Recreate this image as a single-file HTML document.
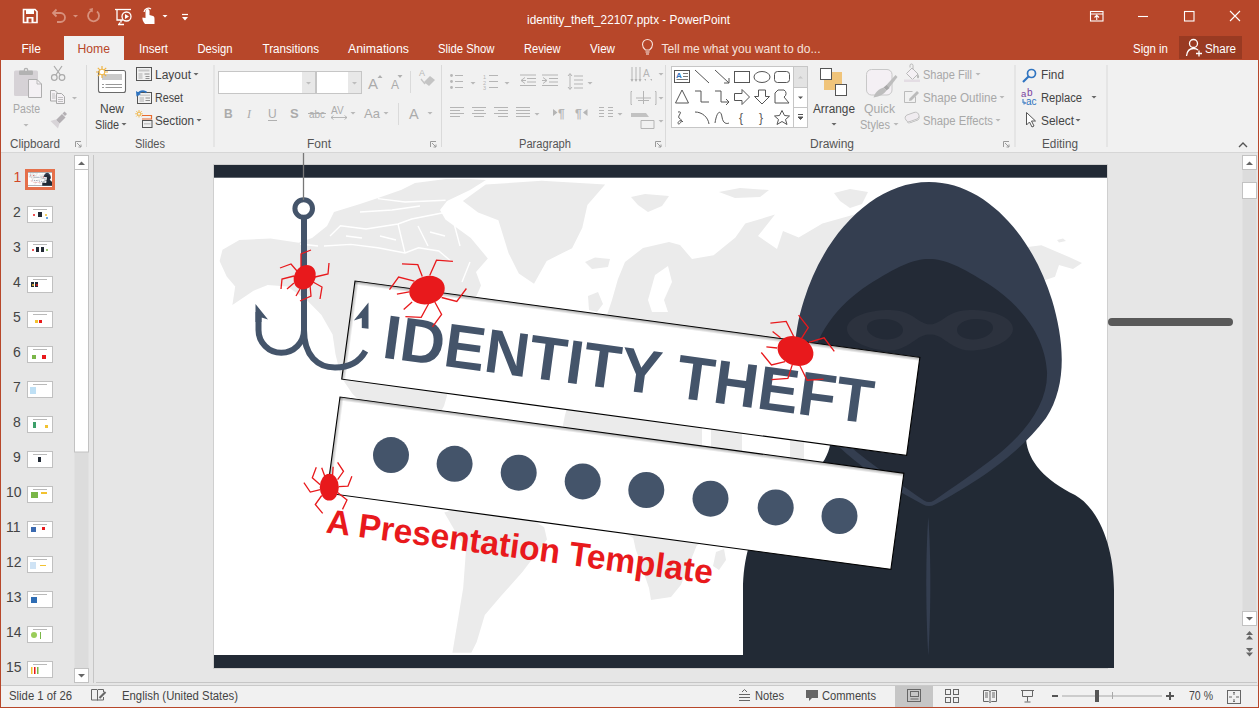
<!DOCTYPE html>
<html><head><meta charset="utf-8">
<style>
*{margin:0;padding:0;box-sizing:border-box}
html,body{width:1259px;height:708px;overflow:hidden;background:#E6E6E6;font-family:"Liberation Sans",sans-serif}
.a{position:absolute}
svg{display:block}
</style></head>
<body>
<svg class="a" style="left:0;top:0" width="1259" height="60" viewBox="0 0 1259 60">
<rect x="0" y="0" width="1259" height="60" fill="#B7472A"/>
<rect x="64" y="36" width="60" height="24" fill="#F1F1F1"/>
<rect x="1179" y="36" width="63" height="23" fill="#993A22"/>
<g font-family="Liberation Sans" font-size="12" fill="#fff">
<text x="527" y="24" textLength="203" lengthAdjust="spacingAndGlyphs">identity_theft_22107.pptx - PowerPoint</text>
<text x="21.5" y="53">File</text>
<text x="77.5" y="53" fill="#B7472A" textLength="32.5" lengthAdjust="spacingAndGlyphs">Home</text>
<text x="139" y="53" textLength="29" lengthAdjust="spacingAndGlyphs">Insert</text>
<text x="197.5" y="53" textLength="35" lengthAdjust="spacingAndGlyphs">Design</text>
<text x="262.5" y="53" textLength="56.5" lengthAdjust="spacingAndGlyphs">Transitions</text>
<text x="348" y="53" textLength="61" lengthAdjust="spacingAndGlyphs">Animations</text>
<text x="438" y="53" textLength="56.5" lengthAdjust="spacingAndGlyphs">Slide Show</text>
<text x="524" y="53" textLength="36.5" lengthAdjust="spacingAndGlyphs">Review</text>
<text x="590" y="53" textLength="25" lengthAdjust="spacingAndGlyphs">View</text>
<text x="661.5" y="53" fill="#F6E2DC" textLength="159" lengthAdjust="spacingAndGlyphs">Tell me what you want to do...</text>
<text x="1133" y="53" textLength="35" lengthAdjust="spacingAndGlyphs">Sign in</text>
<text x="1205" y="53" textLength="31" lengthAdjust="spacingAndGlyphs">Share</text>
</g>
<!-- bulb -->
<g fill="none" stroke="#F6E2DC" stroke-width="1.1">
<path d="M645.5,50 C643,48 642.5,46 642.5,44.5 A5,5 0 0 1 652.5,44.5 C652.5,46 652,48 649.5,50 Z"/>
<line x1="645.5" y1="52" x2="649.5" y2="52"/>
<line x1="646" y1="54" x2="649" y2="54"/>
</g>
<!-- share person -->
<g fill="none" stroke="#fff" stroke-width="1.3">
<circle cx="1193.5" cy="43.5" r="4"/>
<path d="M1186.5,56 C1187,51 1189.5,48.5 1193.5,48.5 C1195.5,48.5 1197,49 1198,50"/>
<path d="M1196,53.5 H1202 M1199,50.5 V56.5"/>
</g>
<!-- QAT -->
<g fill="none" stroke="#fff" stroke-width="1.6">
<path d="M23.5,9.5 H35 L37,11.5 V22.5 H23.5 Z"/>
</g>
<rect x="26" y="10" width="8" height="4" fill="#fff"/>
<rect x="26.5" y="17" width="7" height="5.5" fill="#fff"/>
<rect x="28.5" y="18.5" width="3" height="4" fill="#B7472A"/>
<g fill="none" stroke="#D7917D" stroke-width="1.8">
<path d="M53,13 H60.5 A4.5,4.5 0 0 1 60.5,22 H57"/>
<path d="M56.5,9.5 L53,13 L56.5,16.5"/>
<path d="M97,11.5 A5.5,5.5 0 1 1 92,10.5"/>
</g>
<path d="M89,9 L93,8 L92.5,12.5 Z" fill="#D7917D"/>
<path d="M73,15 H78 L75.5,17.5 Z" fill="#D7917D"/>
<g fill="none" stroke="#fff" stroke-width="1.3">
<path d="M115,9.5 H131"/>
<path d="M117,10 V20 H123"/>
<circle cx="126.5" cy="16.5" r="4.5"/>
<path d="M120,22.5 L119,24.5 M118,24.5 H124 M121,20 V22.5"/>
</g>
<path d="M125,14 L129,16.5 L125,19 Z" fill="#fff"/>
<path d="M145,24 C143,22 142,19 142.5,17.5 L145.5,18 V11 A2,2 0 0 1 149.5,11 V15 L153,16 C154.5,16.5 154.5,18 154.5,19 V24 Z" fill="#fff"/>
<path d="M144,12 A4.5,4.5 0 0 1 151,9" fill="none" stroke="#fff" stroke-width="1.2"/>
<path d="M162.5,15 H167.5 L165,17.5 Z" fill="#fff"/>
<path d="M182,14.5 H188" stroke="#fff" stroke-width="1.2"/>
<path d="M182,17 H188 L185,20.5 Z" fill="#fff"/>
<!-- window controls -->
<g fill="none" stroke="#fff" stroke-width="1.1">
<rect x="1090.5" y="11.5" width="12.5" height="9.5"/>
<path d="M1090.5,14 H1103 M1096.75,20 V15.5 M1094.5,17.5 L1096.75,15.3 L1099,17.5"/>
<path d="M1138,16.5 H1148"/>
<rect x="1184.5" y="11.5" width="9.5" height="9.5"/>
<path d="M1230,11 L1240,21 M1240,11 L1230,21"/>
</g>
</svg>

<svg class="a" style="left:0;top:60px" width="1259" height="93" viewBox="0 60 1259 93">
<rect x="0" y="60" width="1259" height="93" fill="#F1F1F1"/>
<rect x="0" y="152" width="1259" height="1" fill="#D6D6D6"/>
<!-- separators -->
<g fill="#DADADA">
<rect x="86" y="65" width="1" height="82"/>
<rect x="213.5" y="65" width="1" height="82"/>
<rect x="441" y="65" width="1" height="82"/>
<rect x="665" y="65" width="1" height="82"/>
<rect x="1014.5" y="65" width="1" height="82"/>
<rect x="1106.5" y="65" width="1" height="82"/>
<rect x="410" y="71" width="1" height="22"/>
<rect x="398" y="103" width="1" height="22"/>
</g>
<g font-family="Liberation Sans" font-size="12" fill="#444">
<text x="10" y="148" fill="#555" textLength="50" lengthAdjust="spacingAndGlyphs">Clipboard</text>
<text x="135" y="148" fill="#555" textLength="30" lengthAdjust="spacingAndGlyphs">Slides</text>
<text x="307" y="148" fill="#555" textLength="24" lengthAdjust="spacingAndGlyphs">Font</text>
<text x="519" y="148" fill="#555" textLength="52" lengthAdjust="spacingAndGlyphs">Paragraph</text>
<text x="810" y="148" fill="#555" textLength="44" lengthAdjust="spacingAndGlyphs">Drawing</text>
<text x="1042" y="148" fill="#555" textLength="36" lengthAdjust="spacingAndGlyphs">Editing</text>
<text x="13" y="113" fill="#A8A8A8" textLength="27" lengthAdjust="spacingAndGlyphs">Paste</text>
<text x="100" y="113" textLength="24" lengthAdjust="spacingAndGlyphs">New</text>
<text x="95" y="129" textLength="24" lengthAdjust="spacingAndGlyphs">Slide</text>
<text x="155" y="79" textLength="36" lengthAdjust="spacingAndGlyphs">Layout</text>
<text x="155" y="102" textLength="28" lengthAdjust="spacingAndGlyphs">Reset</text>
<text x="155" y="125" textLength="39" lengthAdjust="spacingAndGlyphs">Section</text>
<text x="813" y="113" textLength="42" lengthAdjust="spacingAndGlyphs">Arrange</text>
<text x="864" y="113" fill="#A8A8A8" textLength="31" lengthAdjust="spacingAndGlyphs">Quick</text>
<text x="860" y="129" fill="#A8A8A8" textLength="30" lengthAdjust="spacingAndGlyphs">Styles</text>
<text x="923" y="79" fill="#A8A8A8" textLength="49" lengthAdjust="spacingAndGlyphs">Shape Fill</text>
<text x="923" y="102" fill="#A8A8A8" textLength="74" lengthAdjust="spacingAndGlyphs">Shape Outline</text>
<text x="923" y="125" fill="#A8A8A8" textLength="70" lengthAdjust="spacingAndGlyphs">Shape Effects</text>
<text x="1041" y="79" textLength="23" lengthAdjust="spacingAndGlyphs">Find</text>
<text x="1041" y="102" textLength="41" lengthAdjust="spacingAndGlyphs">Replace</text>
<text x="1041" y="125" textLength="33" lengthAdjust="spacingAndGlyphs">Select</text>
</g>
<!-- dropdown arrows -->
<g fill="#666">
<path d="M121.5,123 h5 l-2.5,2.5z"/>
<path d="M193.5,73 h5 l-2.5,2.5z"/>
<path d="M196.5,119 h5 l-2.5,2.5z"/>
<path d="M831.5,123 h5 l-2.5,2.5z"/>
<path d="M1091.5,96 h5 l-2.5,2.5z"/>
<path d="M1075.5,119 h5 l-2.5,2.5z"/>
</g>
<g fill="#B8B8B8">
<path d="M23.5,124 h5 l-2.5,2.5z"/>
<path d="M72,97 h5 l-2.5,2.5z"/>
<path d="M893.5,123 h5 l-2.5,2.5z"/>
<path d="M975.5,73 h5 l-2.5,2.5z"/>
<path d="M999.5,96 h5 l-2.5,2.5z"/>
<path d="M995.5,119 h5 l-2.5,2.5z"/>
<path d="M350.5,112 h5 l-2.5,2.5z"/>
<path d="M383.5,112 h5 l-2.5,2.5z"/>
<path d="M427.5,112 h5 l-2.5,2.5z"/>
<path d="M470.5,82 h5 l-2.5,2.5z"/>
<path d="M504.5,82 h5 l-2.5,2.5z"/>
<path d="M587.5,82 h5 l-2.5,2.5z"/>
<path d="M534.5,113 h5 l-2.5,2.5z"/>
<path d="M617.5,113 h5 l-2.5,2.5z"/>
<path d="M658.5,73 h5 l-2.5,2.5z"/>
<path d="M658.5,97 h5 l-2.5,2.5z"/>
<path d="M658.5,120 h5 l-2.5,2.5z"/>
</g>
<!-- dialog launchers -->
<g fill="none" stroke="#9A9A9A" stroke-width="1">
<path d="M75.5,147 V141.5 H81 M77,143 L81,147 M81,144.5 V147 H78.5"/>
<path d="M430.5,147 V141.5 H436 M432,143 L436,147 M436,144.5 V147 H433.5"/>
<path d="M655.5,147 V141.5 H661 M657,143 L661,147 M661,144.5 V147 H658.5"/>
<path d="M1003.5,147 V141.5 H1009 M1005,143 L1009,147 M1009,144.5 V147 H1006.5"/>
</g>
<path d="M1239,147 L1243,143 L1247,147" fill="none" stroke="#555" stroke-width="1.4"/>
<!-- clipboard icons -->
<rect x="14" y="70.5" width="24" height="25.5" rx="1.5" fill="#D6D2D6"/>
<rect x="19" y="70.5" width="14" height="4.5" rx="1" fill="#B2B2B2"/>
<circle cx="26" cy="70" r="2.3" fill="#B2B2B2"/>
<circle cx="26" cy="70" r="0.9" fill="#F1F1F1"/>
<path d="M28.5,79.5 h8.5 l4.5,4.5 v13.5 h-13z" fill="#F4F1F4" stroke="#AEAEAE" stroke-width="1"/>
<path d="M37,79.5 v4.5 h4.5" fill="none" stroke="#AEAEAE" stroke-width="0.8"/>
<g fill="none" stroke="#AAAAAA" stroke-width="1.2">
<circle cx="54.3" cy="77.5" r="2.8"/><circle cx="62" cy="77.5" r="2.8"/>
<path d="M55.8,75 L62,66 M60.5,75 L54,66"/>
</g>
<g fill="#F4F1F4" stroke="#A8A8A8" stroke-width="1">
<path d="M50.5,90.5 h4.5 l2.5,2.5 v8 h-7z"/>
<path d="M56.5,93.5 h5 l3,3 v7 h-8z"/>
</g>
<path d="M52,94 h3 M52,96 h3.5 M52,98 h3.5 M58,97.5 h5 M58,99.5 h5 M58,101.5 h5" stroke="#A8A8A8" stroke-width="0.7"/>
<path d="M56,120 l6,-6 l3.5,3.5 l-6,6z" fill="#B4B0B4"/>
<path d="M62.5,113.5 l2,-2 l2.5,2.5 l-2,2z" fill="#B4B0B4"/>
<path d="M50.5,121 l5,-1.5 l4,4 l-1.5,5z" fill="#D8D4D8"/>
<!-- new slide -->
<rect x="98.5" y="70.5" width="27" height="22" rx="2" fill="#fff" stroke="#6A6A6A" stroke-width="1.1"/>
<rect x="102" y="74" width="20" height="6" fill="#CACACA"/>
<path d="M102,84.5 h2 M105.5,84.5 h16.5 M102,87.5 h2 M105.5,87.5 h16.5" stroke="#8C8C8C" stroke-width="0.9"/>
<g stroke="#EFB443" stroke-width="1.2">
<path d="M102,66 v12 M96,72 h12 M97.8,67.8 l8.4,8.4 M106.2,67.8 l-8.4,8.4"/>
</g>
<circle cx="102" cy="72" r="2.8" fill="#fff" stroke="#EFB443" stroke-width="1"/>
<!-- layout / reset / section -->
<g fill="none" stroke="#555" stroke-width="1">
<rect x="136.5" y="67.5" width="15" height="13"/>
<rect x="137.5" y="92.5" width="14" height="11"/>
<rect x="142.5" y="120.5" width="9.5" height="7"/>
</g>
<rect x="138.5" y="69.5" width="11" height="2" fill="#C8C8C8"/>
<rect x="138.5" y="73" width="4" height="6" fill="#D0D0D0"/>
<path d="M144.5,74 h5 M145.5,76.5 h4 M145.5,78.5 h4" stroke="#777" stroke-width="0.8"/>
<rect x="139.5" y="97" width="4.5" height="5" fill="#D0D0D0"/>
<rect x="139.5" y="94.5" width="10.5" height="1.5" fill="#D0D0D0"/>
<path d="M145.5,98 h4.5 M145.5,100.5 h4.5" stroke="#777" stroke-width="0.8"/>
<path d="M137.5,95.5 A5.5,5.5 0 0 1 146.5,92.5" fill="none" stroke="#2F74C0" stroke-width="1.7"/>
<path d="M136,91 L136.5,96.5 L141,94 Z" fill="#2F74C0"/>
<rect x="144" y="123" width="6.5" height="1.5" fill="#C8C8C8"/>
<path d="M142,115.5 h9.5 v3.5 h-9.5" fill="none" stroke="#E86B2E" stroke-width="1.2"/>
<g stroke="#EFB443" stroke-width="0.9"><path d="M139,110 v7.5 M135.2,113.8 h7.6 M136.3,111.1 l5.4,5.4 M141.7,111.1 l-5.4,5.4"/></g>
<circle cx="139" cy="113.8" r="1.6" fill="#F1F1F1" stroke="#EFB443" stroke-width="0.8"/>
<!-- font boxes -->
<rect x="218.5" y="71.5" width="97" height="22" fill="#fff" stroke="#C6C6C6"/>
<rect x="302" y="72" width="13" height="21" fill="#E8E8E8"/>
<rect x="316.5" y="71.5" width="45" height="22" fill="#fff" stroke="#C6C6C6"/>
<rect x="348" y="72" width="13" height="21" fill="#E8E8E8"/>
<path d="M306,82 h5 l-2.5,2.5z M352,82 h5 l-2.5,2.5z" fill="#BDBDBD"/>
<g font-family="Liberation Sans" fill="#ABABAB">
<text x="368" y="89" font-size="15">A</text>
<text x="391" y="89" font-size="12">A</text>
<text x="224" y="118" font-size="12" font-weight="bold">B</text>
<text x="247" y="118" font-size="12" font-style="italic" font-family="Liberation Serif">I</text>
<text x="268" y="118" font-size="12">U</text>
<text x="290" y="118" font-size="13" font-weight="bold">S</text>
<text x="309" y="118" font-size="10">abc</text>
<text x="331" y="114" font-size="10">AV</text>
<text x="364" y="118" font-size="13">Aa</text>
<text x="409" y="118.5" font-size="14.5">A</text>
</g>
<g fill="#B0B0B0">
<path d="M377.5,78 l2.5,-3 l2.5,3z M397.5,75 l2.5,3 l2.5,-3z"/>
<rect x="268" y="120" width="9" height="1"/>
<rect x="308" y="113" width="18" height="1"/>
</g>
<path d="M331,117.5 h16 M333.5,115.5 l-2.5,2 l2.5,2 M344.5,115.5 l2.5,2 l-2.5,2" fill="none" stroke="#B0B0B0" stroke-width="0.9"/>
<path d="M424,82 l6,-6 l5,4 l-6,6z" fill="#C4C4C4"/>
<path d="M421,79 l3.5,4.5 l4,-4" fill="none" stroke="#C4C4C4" stroke-width="1.3"/>
<text x="419" y="76" font-family="Liberation Sans" font-size="9" fill="#B8B8B8">A</text>
<!-- paragraph icons -->
<g fill="#B5B5B5">
<circle cx="451.5" cy="75.5" r="1.4"/><circle cx="451.5" cy="81.5" r="1.4"/><circle cx="451.5" cy="87.5" r="1.4"/>
</g>
<g stroke="#B5B5B5" stroke-width="1" fill="none">
<path d="M455,75.5 h8 M455,81.5 h8 M455,87.5 h8"/>
<path d="M489,75.5 h9 M489,81.5 h9 M489,87.5 h9"/>
<path d="M520,75 h16 M527,78.5 h9 M527,82 h9 M520,85.5 h16 M521,80.5 l4,-3 M521,80.5 l4,3 M521,80.5 h5"/>
<path d="M542,75 h16 M549,78.5 h9 M549,82 h9 M542,85.5 h16 M547,80.5 l-4,-3 M547,80.5 l-4,3 M542,80.5 h5"/>
<path d="M574,76 h9 M574,80 h9 M574,84 h9 M574,88 h9 M570,74 v15 M568,76 l2,-2.5 l2,2.5 M568,87 l2,2.5 l2,-2.5"/>
<path d="M450,107.5 h14 M450,110.5 h10 M450,113.5 h14 M450,116.5 h10"/>
<path d="M472,107.5 h14 M474,110.5 h10 M472,113.5 h14 M474,116.5 h10"/>
<path d="M494,107.5 h14 M498,110.5 h10 M494,113.5 h14 M498,116.5 h10"/>
<path d="M516,107.5 h14 M516,110.5 h14 M516,113.5 h14 M516,116.5 h14"/>
<path d="M599,107.5 h5 M599,110.5 h5 M599,113.5 h5 M599,116.5 h5 M608,107.5 h5 M608,110.5 h5 M608,113.5 h5 M608,116.5 h5"/>
<path d="M632,67 v14 M636,67 v14 M640,67 v14"/>
<path d="M632,91.5 h-1 v13 h1 M655,91.5 h1 v13 h-1 M636,98 h15 M638,100.5 h11 M643.5,91 v13"/>
<path d="M641,120.5 h13 v8 h-13 z"/>
</g>
<text x="483" y="79" font-family="Liberation Sans" font-size="5.5" fill="#B5B5B5">1</text>
<text x="483" y="84.5" font-family="Liberation Sans" font-size="5.5" fill="#B5B5B5">2</text>
<text x="483" y="90" font-family="Liberation Sans" font-size="5.5" fill="#B5B5B5">3</text>
<text x="558" y="118" font-family="Liberation Sans" font-size="12" font-weight="bold" fill="#B5B5B5">¶</text>
<text x="575" y="118" font-family="Liberation Sans" font-size="12" font-weight="bold" fill="#B5B5B5">¶</text>
<path d="M553,109 l4.5,3.5 l-4.5,3.5z M587.5,109 l-4.5,3.5 l4.5,3.5z" fill="#B5B5B5"/>
<text x="643" y="77" font-family="Liberation Sans" font-size="10" fill="#B5B5B5">A</text>
<path d="M630.5,79 l1.5,3 l1.5,-3z M634.5,79 l1.5,3 l1.5,-3z M638.5,79 l1.5,3 l1.5,-3z M644,79 h2 v2 M650,79 h2 v2" fill="#B5B5B5"/>
<path d="M631,113 h15 l3,4 h-18z" fill="#C2C2C2"/>
<!-- shapes gallery -->
<rect x="671.5" y="66.5" width="122" height="61" fill="#fff" stroke="#C6C6C6"/>
<rect x="793.5" y="66.5" width="14" height="61" fill="#fff" stroke="#C6C6C6"/>
<rect x="794" y="67" width="13" height="20" fill="#E3E3E3"/>
<path d="M793.5,87.5 h14 M793.5,107.5 h14" stroke="#C6C6C6"/>
<path d="M798,78.5 h5 l-2.5,-2.5z" fill="#C8C8C8"/>
<path d="M798,96.5 h5 l-2.5,2.5z" fill="#555"/>
<path d="M798,114.5 h5 M798,117 h5 l-2.5,2.5z" stroke="#555" stroke-width="1" fill="#555"/>
<g fill="none" stroke="#555" stroke-width="1">
<rect x="674.5" y="70.5" width="15" height="12"/>
<path d="M683,73.5 h5 M683,76.5 h5 M676.5,79.5 h11.5" stroke-width="0.8"/>
<text x="676" y="78" font-family="Liberation Sans" font-size="8" font-weight="bold" fill="#2F74C0" stroke="none">A</text>
<path d="M695,70 L709,83"/>
<path d="M715,70 L729,83 M729,78 V83 H724"/>
<rect x="734.5" y="71.5" width="15" height="11"/>
<ellipse cx="762" cy="77" rx="8" ry="5.5"/>
<rect x="774.5" y="71.5" width="15" height="11" rx="3"/>
<path d="M675.5,103 L682,90 L688.5,103 Z"/>
<path d="M695,91 H701 V102 H709"/>
<path d="M715,91 H721 V102 H729 M726,99 L729,102 L726,105"/>
<path d="M734.5,93.5 H742 V89.5 L749.5,97 L742,104.5 V100.5 H734.5 Z"/>
<path d="M758.5,90 H765.5 V96.5 H769.5 L762,104 L754.5,96.5 H758.5 Z"/>
<path d="M775,103 V93 L778,90 H784 A4,4 0 0 1 784,97 L789,103 Z"/>
<path d="M678,112 C684,111 677,116 679,118 C683,120 681,123 679,124 C676,124 680,118 683,122"/>
<path d="M695,112 C702,112 708,117 709,124"/>
<path d="M715,123 C717,110 721,110 722,117 C723,124 727,124 729,123"/>
<text x="739" y="122" font-family="Liberation Sans" font-size="12" fill="#555" stroke="none">{</text>
<text x="759" y="122" font-family="Liberation Sans" font-size="12" fill="#555" stroke="none">}</text>
<path d="M782,110.5 L784.5,115.5 L789.5,116 L785.5,119.5 L787,124.5 L782,121.5 L777,124.5 L778.5,119.5 L774.5,116 L779.5,115.5 Z"/>
</g>
<!-- arrange -->
<rect x="820.5" y="68.5" width="11" height="11" fill="#fff" stroke="#555"/>
<rect x="824" y="72" width="18" height="18" fill="#F0C47A"/>
<rect x="820.5" y="68.5" width="11" height="11" fill="#fff" stroke="#555"/>
<rect x="835.5" y="84.5" width="11" height="11" fill="#fff" stroke="#555"/>
<!-- quick styles -->
<rect x="866.5" y="69.5" width="25.5" height="25.5" rx="5" fill="#F4F0F4" stroke="#C8C8C8"/>
<path d="M895.5,75 L897.5,77 L889,88 L886,85.5 Z" fill="#BDBDBD"/>
<path d="M886.5,85 L889.5,88 L886.5,90.5 L883.5,87.5 Z" fill="#A8A8A8"/>
<path d="M883.5,87.5 L886.5,90.5 C884,94 880,96.5 873.5,97.5 C875,92.5 878.5,89 883.5,87.5 Z" fill="#BDBDBD"/>
<!-- shape fill/outline/effects -->
<path d="M906.5,73.5 l5.5,-5.5 l6,6 l-5.5,5.5z" fill="#F4F0F4" stroke="#B8B8B8" stroke-width="1"/>
<path d="M910,67.5 v-2 a1.5,1.5 0 0 1 3,0 v4" fill="none" stroke="#B8B8B8" stroke-width="1"/>
<path d="M918,74 c1.5,2 1.5,3.5 0,4.5 c-1.5,-1 -1.5,-2.5 0,-4.5z" fill="#B8B8B8"/>
<rect x="904" y="79.5" width="16" height="2.5" fill="#E4DDE4"/>
<path d="M904.5,102.5 v-11 h8 M915.5,96.5 v6 h-11" fill="none" stroke="#BBB" stroke-width="1"/>
<path d="M909,101 l0.5,-2.5 l7.5,-7.5 l2,2 l-7.5,7.5z" fill="#BBB"/>
<path d="M906,120 c-1.5,-2 -1,-4 1,-5 l7,-2.5 c2,-0.7 3.5,0 4.5,1.5 c1,2 0.5,4 -1.5,5 l-7,2.5 c-2,0.7 -3,0 -4,-1.5z" fill="#F0ECF0" stroke="#BBB" stroke-width="0.9"/>
<path d="M906.5,121.5 c1,1.5 2,2.2 4,1.5 l7,-2.5 c2,-1 2.5,-3 1.5,-5 c0.5,2 0,3.5 -2,4.5 l-7,2.5 c-1.5,0.5 -2.5,0 -3.5,-1z" fill="#B0B0B0"/>
<!-- editing -->
<circle cx="1031.5" cy="73.5" r="4" fill="none" stroke="#2F74C0" stroke-width="1.7"/>
<path d="M1028.5,76.5 l-5.5,5.5" stroke="#2F74C0" stroke-width="2.2"/>
<text x="1021" y="97" font-family="Liberation Sans" font-size="9.5" fill="#7A3FA0">a</text>
<text x="1027" y="96" font-family="Liberation Sans" font-size="10" fill="#7A3FA0">b</text>
<text x="1026" y="105" font-family="Liberation Sans" font-size="10" fill="#2F74C0">ac</text>
<path d="M1023,99 v4 h2.5 M1024,101.5 l1.5,1.5 l-1.5,1.5" fill="none" stroke="#2F74C0" stroke-width="1"/>
<path d="M1026.5,112.5 V125 L1029.5,122 L1032,127 L1034,126 L1031.5,121 H1035.5 Z" fill="#fff" stroke="#555" stroke-width="1"/>
</svg>

<svg class="a" style="left:0;top:153px" width="1259" height="555" viewBox="0 153 1259 555">
<rect x="93" y="155" width="1" height="528" fill="#C6C6C6"/>
<rect x="96" y="682" width="1161" height="1" fill="#C6C6C6"/>
<rect x="74.5" y="170" width="14" height="498" fill="#DCDCDC"/>
<rect x="74.5" y="155.5" width="14" height="14" fill="#fff" stroke="#C2C2C2"/>
<path d="M78,165 h7 l-3.5,-3.5z" fill="#666"/>
<rect x="74.5" y="169.5" width="14" height="282.5" fill="#fff" stroke="#C2C2C2"/>
<rect x="74.5" y="668.5" width="14" height="14" fill="#fff" stroke="#C2C2C2"/>
<path d="M78,674 h7 l-3.5,3.5z" fill="#666"/>
<rect x="1242.5" y="170" width="14" height="441" fill="#DCDCDC"/>
<rect x="1242.5" y="155.5" width="14" height="14" fill="#fff" stroke="#C2C2C2"/>
<path d="M1246,165 h7 l-3.5,-3.5z" fill="#666"/>
<rect x="1242.5" y="182.5" width="14" height="16" fill="#fff" stroke="#C2C2C2"/>
<rect x="1242.5" y="611.5" width="14" height="14" fill="#fff" stroke="#C2C2C2"/>
<path d="M1246,617 h7 l-3.5,3.5z" fill="#666"/>
<path d="M1246,635 l3.5,-4 l3.5,4z M1246,639.5 l3.5,-4 l3.5,4z M1246,648 l3.5,4 l3.5,-4z M1246,652.5 l3.5,4 l3.5,-4z" fill="#666"/>
<rect x="26.5" y="170.5" width="27" height="18" fill="#fff" stroke="#E5704B" stroke-width="3"/>
<rect x="28" y="172" width="24" height="15" fill="#fff"/>
<clipPath id="th1"><rect x="28" y="172" width="24" height="15"/></clipPath><g clip-path="url(#th1)"><use href="#sc" transform="translate(28,172.2) scale(0.0269) translate(-214,-165)"/></g>
<text x="13.5" y="182" font-family="Liberation Sans" font-size="14" fill="#D24726">1</text>
<rect x="27.5" y="206.5" width="25" height="16" fill="#fff" stroke="#C0C0C0"/>
<text x="13" y="216.5" font-family="Liberation Sans" font-size="14" fill="#444">2</text>
<rect x="33" y="209" width="14" height="1" fill="#8A8A8A" opacity=".6"/>
<rect x="27.5" y="241.5" width="25" height="16" fill="#fff" stroke="#C0C0C0"/>
<text x="13" y="251.5" font-family="Liberation Sans" font-size="14" fill="#444">3</text>
<rect x="33" y="244" width="14" height="1" fill="#8A8A8A" opacity=".6"/>
<rect x="27.5" y="276.5" width="25" height="16" fill="#fff" stroke="#C0C0C0"/>
<text x="13" y="286.5" font-family="Liberation Sans" font-size="14" fill="#444">4</text>
<rect x="33" y="279" width="14" height="1" fill="#8A8A8A" opacity=".6"/>
<rect x="27.5" y="311.5" width="25" height="16" fill="#fff" stroke="#C0C0C0"/>
<text x="13" y="321.5" font-family="Liberation Sans" font-size="14" fill="#444">5</text>
<rect x="33" y="314" width="14" height="1" fill="#8A8A8A" opacity=".6"/>
<rect x="27.5" y="346.5" width="25" height="16" fill="#fff" stroke="#C0C0C0"/>
<text x="13" y="356.5" font-family="Liberation Sans" font-size="14" fill="#444">6</text>
<rect x="33" y="349" width="14" height="1" fill="#8A8A8A" opacity=".6"/>
<rect x="27.5" y="381.5" width="25" height="16" fill="#fff" stroke="#C0C0C0"/>
<text x="13" y="391.5" font-family="Liberation Sans" font-size="14" fill="#444">7</text>
<rect x="33" y="384" width="14" height="1" fill="#8A8A8A" opacity=".6"/>
<rect x="27.5" y="416.5" width="25" height="16" fill="#fff" stroke="#C0C0C0"/>
<text x="13" y="426.5" font-family="Liberation Sans" font-size="14" fill="#444">8</text>
<rect x="33" y="419" width="14" height="1" fill="#8A8A8A" opacity=".6"/>
<rect x="27.5" y="451.5" width="25" height="16" fill="#fff" stroke="#C0C0C0"/>
<text x="13" y="461.5" font-family="Liberation Sans" font-size="14" fill="#444">9</text>
<rect x="33" y="454" width="14" height="1" fill="#8A8A8A" opacity=".6"/>
<rect x="27.5" y="486.5" width="25" height="16" fill="#fff" stroke="#C0C0C0"/>
<text x="6" y="496.5" font-family="Liberation Sans" font-size="14" fill="#444">10</text>
<rect x="33" y="489" width="14" height="1" fill="#8A8A8A" opacity=".6"/>
<rect x="27.5" y="521.5" width="25" height="16" fill="#fff" stroke="#C0C0C0"/>
<text x="6" y="531.5" font-family="Liberation Sans" font-size="14" fill="#444">11</text>
<rect x="33" y="524" width="14" height="1" fill="#8A8A8A" opacity=".6"/>
<rect x="27.5" y="556.5" width="25" height="16" fill="#fff" stroke="#C0C0C0"/>
<text x="6" y="566.5" font-family="Liberation Sans" font-size="14" fill="#444">12</text>
<rect x="33" y="559" width="14" height="1" fill="#8A8A8A" opacity=".6"/>
<rect x="27.5" y="591.5" width="25" height="16" fill="#fff" stroke="#C0C0C0"/>
<text x="6" y="601.5" font-family="Liberation Sans" font-size="14" fill="#444">13</text>
<rect x="33" y="594" width="14" height="1" fill="#8A8A8A" opacity=".6"/>
<rect x="27.5" y="626.5" width="25" height="16" fill="#fff" stroke="#C0C0C0"/>
<text x="6" y="636.5" font-family="Liberation Sans" font-size="14" fill="#444">14</text>
<rect x="33" y="629" width="14" height="1" fill="#8A8A8A" opacity=".6"/>
<rect x="27.5" y="661.5" width="25" height="16" fill="#fff" stroke="#C0C0C0"/>
<text x="6" y="671.5" font-family="Liberation Sans" font-size="14" fill="#444">15</text>
<rect x="33" y="664" width="14" height="1" fill="#8A8A8A" opacity=".6"/>
<path d="M38,212 h4 v5 h-4z" fill="#222A35"/><circle cx="34" cy="215" r="1" fill="#E8191C"/><circle cx="46" cy="215" r="1" fill="#F2C230"/><circle cx="47" cy="218" r="1" fill="#3B8ED8"/>
<path d="M36,247 h3 v5 h-3z M41,247 h3 v5 h-3z" fill="#222A35"/><circle cx="33" cy="250" r="1" fill="#E8191C"/><circle cx="47" cy="250" r="1" fill="#7AB648"/>
<path d="M31,282 h3 v5 h-3z M35,282 h3 v5 h-3z" fill="#222A35"/><circle cx="33" cy="285" r="1" fill="#F2C230"/><circle cx="37" cy="285" r="1" fill="#E8191C"/>
<rect x="35" y="320" width="3" height="3" fill="#F2C230"/><rect x="39" y="320" width="3" height="3" fill="#E8191C"/>
<rect x="32" y="355" width="4" height="4" fill="#7AB648"/><rect x="42" y="355" width="4" height="4" fill="#E8191C"/>
<rect x="30" y="387" width="6" height="7" fill="#BFE0F5"/>
<rect x="33" y="422" width="3" height="6" fill="#3CA06A"/><rect x="45" y="425" width="3" height="3" fill="#F2C230"/>
<path d="M38,457 h3 v5 h-3z" fill="#222A35"/>
<rect x="31" y="492" width="7" height="6" fill="#7AB648"/><rect x="41" y="492" width="6" height="2" fill="#F2C230"/>
<rect x="31" y="527" width="5" height="5" fill="#3B6AB0"/><rect x="42" y="527" width="3" height="3" fill="#E8191C"/>
<rect x="30" y="562" width="6" height="7" fill="#CFE3F5"/><rect x="40" y="565" width="6" height="1" fill="#F2C230"/>
<rect x="31" y="597" width="6" height="6" fill="#2E6DB4"/>
<circle cx="34" cy="635" r="3" fill="#9ACD5A"/><rect x="40" y="632" width="1" height="7" fill="#7AB648"/>
<rect x="31" y="667" width="1.5" height="7" fill="#F2C230"/><rect x="34" y="667" width="1.5" height="7" fill="#E8191C"/><rect x="37" y="667" width="1.5" height="7" fill="#7AB648"/>
</svg>
<svg class="a" style="left:0;top:0" width="1259" height="708" viewBox="0 0 1259 708">
<defs>
<clipPath id="ws"><rect x="95" y="153" width="1147" height="529"/></clipPath>
<clipPath id="sl"><rect x="214" y="165" width="893" height="503"/></clipPath>
<linearGradient id="shT" x1="0" y1="0" x2="0" y2="1"><stop offset="0" stop-color="#000" stop-opacity=".35"/><stop offset="1" stop-color="#000" stop-opacity="0"/></linearGradient>
<linearGradient id="shL" x1="0" y1="0" x2="1" y2="0"><stop offset="0" stop-color="#000" stop-opacity=".3"/><stop offset="1" stop-color="#000" stop-opacity="0"/></linearGradient>
</defs>
<g clip-path="url(#ws)">
<g id="sc">
<rect x="213.5" y="164.5" width="894" height="504" fill="#fff" stroke="#CFCFCF" stroke-width="1"/>
<g clip-path="url(#sl)" fill="#EBEBEB">
<path d="M219.6,261 L222.5,249.8 L239.4,239.9 L270.5,238.5 L298.7,242.7 L312,238 L327,226 L334,212 L360,204 L378,198 L401,190 L415,183 L446,179 L470,179 L486,180 L470,190 L447,201 L440,210 L445.4,219.4 L470.8,238 L487.8,258.4 L476,272 L481,285.5 L476,297 L468,322 L452,342 L448,370 L448,392 L444,406 L436,420 L400,422 L372,405 L361,402 L352.4,393.8 L341,377 L335.5,354.3 L332.6,334.5 L321.3,314.7 L307.2,300.6 L287.4,286.5 L267.7,285 L253.5,290.7 L232.4,304.9 L235.2,286.5 L226.7,276.6 Z"/>
<path d="M330,236 L340.5,225.8 L366,229 L398,224 L411.7,219 L437,214 L462.5,208.8 M324,246 L350.7,244.4 L377.8,247.8 L405,253 L418.5,247.8 L438.8,251 L452,262 M377.8,198.6 L405,202 L445.6,200.3 M398,224 L405,253 M418,226 L428,246 M452,216 L460,246 M360,212 L392,210 L420,206 M346,236 L362,238 M430,232 L445,236 M470,262 L462,282 M380,236 L396,240 M300,244 L318,246" fill="none" stroke="#fff" stroke-width="1.4"/>
<path d="M462.9,201.1 L485.7,184.6 L541.7,180.8 L605.2,184.6 L587.4,205 L582.3,227.8 L572.1,248.2 L546.7,260.9 L534,283.7 L518.8,273.6 L508.6,253.2 L498.4,220.2 L478.1,212.6 Z"/>
<path d="M585,262 L595,257.5 L610,259 L608,267 L592,269 Z"/>
<path d="M631,197 L645,194 L669,196 L662,206 L648,212 L638,205 Z"/>
<path d="M588,296 L598,292 L603,304 L597,312 L589,310 Z"/>
<path d="M618,279 L625,262 L643,248 L669,242 L680,245 L692,259 L713.6,255.2 L735.4,237.4 L745.3,223.5 L775,214.6 L758,236 L777,249 L783,231 L798.7,237.4 L822.4,223.5 L858,213.6 L880,201.8 L930,195 L1000,225 L1025.6,247.2 L1041.4,245.2 L1069,257 L1082,263 L1073,269 L1059,265 L1055,276.8 L1043,280.8 L1030,290 L1000,400 L1000,470 L900,480 L830,480 L829,420 L804,420 L804,475 L790,475 L790,420 L742,420 L742,465 L711,465 L711,415 L702,415 L702,465 L720,530 L696.6,545.8 L681,584.7 L671,597 L651,600 L649,588 L635.6,549 L633.3,538 L600,520 L560,440 L565,415 L590,330 L606,318 L612,300 Z"/>
<path d="M648,300 L655,275 L668,266 L672,282 L664,300 L668,312 L652,312 Z" fill="#fff"/>
<path d="M719,192 L740,188 L769,190 L760,197 L735,198 Z"/>
<path d="M834,193 L850,189 L868,192 L862,204 L850,208 L840,201 Z"/>
<path d="M1057,240 L1063,238.5 L1066,241 L1059,242.5 Z"/>
<path d="M444.3,512.4 L470,505 L500,500 L544.2,527.3 L547,539.4 L522.6,571.8 L501,596 L484.8,615 L476.7,642 L471.3,652.8 L452.4,652.8 L457.8,620.4 L463.2,588 L466,550 Z"/>
<path d="M716,552 L724,549 L726,560 L719,570 L713,566 Z"/>

</g>
<rect x="214" y="165" width="893" height="12.7" fill="#222A35"/>
<rect x="214" y="655" width="893" height="13" fill="#222A35"/>
<!-- figure -->
<path fill="#222A35" d="M743,668 L743,590 C743,545 760,510 782,495 C812,480 829,462 831,439 L1026,439 C1028,462 1045,480 1075,495 C1098,508 1114,545 1114,590 L1114,668 Z"/>
<path fill="#343E50" d="M929,182 C985,182 1032,235 1052,300 C1064,340 1068,385 1046,418 C1015,460 962,490 935,504.5 Q929,507.5 923,504.5 C896,490 843,460 813,417 C790,385 791,340 804,300 C824,235 873,182 929,182 Z"/>
<path fill="#232A36" d="M929,259 C945,259 960,266 990,285 C1020,305 1045,335 1047,372 C1048,400 1030,428 1000,453 C975,473 952,488 934,500.5 Q929,503.5 924,500.5 C906,488 883,473 858,453 C828,428 810,400 811,372 C813,335 838,305 868,285 C898,266 913,259 929,259 Z"/>
<path fill="#2C323E" d="M930,324.3 C933,324.3 936,323.5 941,320.5 C950,314 958,310 970,310 C995,310 1013,318 1013,329 C1013,340 992,350.5 970,350.5 C958,350.5 949,343 941,337.5 C936,335 933,334.5 930,334.5 C927,334.5 924,335 919,337.5 C911,343 902,350.5 890,350.5 C868,350.5 847,340 847,329 C847,318 865,310 890,310 C902,310 910,314 919,320.5 C924,323.5 927,324.3 930,324.3 Z"/>
<path fill="#232A36" d="M867,328 C867,320 878,319 885,319 C895,319 903,324 903,330 C903,336 895,339.5 887,339.5 C877,339.5 867,334 867,328 Z M993,328 C993,320 982,319 975,319 C965,319 957,324 957,330 C957,336 965,339.5 973,339.5 C983,339.5 993,334 993,328 Z"/>
<path fill="#343E50" d="M928.3,517 C931,555 931,610 928.3,656 C925.6,610 925.6,555 928.3,517 Z"/>
<!-- card 2 -->
<g transform="translate(340,397) rotate(7.7)">
<rect x="0" y="0" width="569" height="97" fill="#fff"/>
<rect x="0" y="0" width="569" height="4" fill="url(#shT)"/>
<rect x="0" y="0" width="4" height="97" fill="url(#shL)"/>
<rect x="0" y="0" width="569" height="97" fill="none" stroke="#000" stroke-width="1.1"/>
</g>
<g fill="#44546A">
<circle cx="391" cy="455.1" r="18"/><circle cx="454.6" cy="463.8" r="18"/><circle cx="518.7" cy="472.7" r="18"/><circle cx="582.7" cy="481.4" r="18"/>
<circle cx="646.3" cy="490" r="18"/><circle cx="710.5" cy="498.7" r="18"/><circle cx="775.7" cy="507.4" r="18"/><circle cx="839.5" cy="516" r="18"/>
</g>
<!-- card 1 -->
<g transform="translate(355,281) rotate(7.7)">
<rect x="0" y="0" width="570" height="99" fill="#fff"/>
<rect x="0" y="0" width="570" height="4" fill="url(#shT)"/>
<rect x="0" y="0" width="4" height="99" fill="url(#shL)"/>
<rect x="0" y="0" width="570" height="99" fill="none" stroke="#000" stroke-width="1.1"/>
<text x="36" y="72.4" font-family="Liberation Sans" font-weight="bold" font-size="62" fill="#44546A" textLength="494" lengthAdjust="spacingAndGlyphs">IDENTITY THEFT</text>
</g>
<!-- hook -->
<g fill="none" stroke="#44546A" stroke-width="6">
<circle cx="303.7" cy="208.5" r="8.8" stroke-width="5"/>
<path d="M304,217 L304,337"/>
<path d="M258.5,312 L258.5,330 A22.75,22.75 0 0 0 304,330"/>
<path d="M304,330 C304,356 318,367.5 335,367.5 C350,367.5 360,361 365.5,351"/>
</g>
<g fill="#44546A">
<polygon points="255.5,304 268,319.5 261.5,317.5 261.5,322 255.5,322"/>
<polygon points="368.5,302.5 368.5,328.7 361.8,328 361.8,318 353.8,320.5"/>
</g>
<line x1="303.5" y1="152" x2="303.5" y2="200" stroke="#777" stroke-width="1.3"/>
<ellipse cx="304.7" cy="277.2" rx="10.5" ry="12.8" transform="rotate(30 304.7 277.2)" fill="#E8191C"/><polyline points="301,269 301,254 311,250" fill="none" stroke="#E8191C" stroke-width="1.3" stroke-linejoin="miter"/><polyline points="297,271 291,264 280,268" fill="none" stroke="#E8191C" stroke-width="1.3" stroke-linejoin="miter"/><polyline points="294,276 282,279 281,289" fill="none" stroke="#E8191C" stroke-width="1.3" stroke-linejoin="miter"/><polyline points="294,283 287,289" fill="none" stroke="#E8191C" stroke-width="1.3" stroke-linejoin="miter"/><polyline points="300,289 296,296" fill="none" stroke="#E8191C" stroke-width="1.3" stroke-linejoin="miter"/><polyline points="310,285 311,296 300,301" fill="none" stroke="#E8191C" stroke-width="1.3" stroke-linejoin="miter"/><polyline points="313,282 322,287 320,299" fill="none" stroke="#E8191C" stroke-width="1.3" stroke-linejoin="miter"/><polyline points="315,277 328,274 329,263" fill="none" stroke="#E8191C" stroke-width="1.3" stroke-linejoin="miter"/><ellipse cx="427" cy="290.2" rx="18" ry="14" transform="rotate(-15 427 290.2)" fill="#E8191C"/><polyline points="422.3,276.6 417.8,264.7 402,263.8" fill="none" stroke="#E8191C" stroke-width="1.3" stroke-linejoin="miter"/><polyline points="429.7,275.5 436.5,260.2 452.9,261.3" fill="none" stroke="#E8191C" stroke-width="1.3" stroke-linejoin="miter"/><polyline points="414.4,281.1 398.6,277.1 389.5,289.6" fill="none" stroke="#E8191C" stroke-width="1.3" stroke-linejoin="miter"/><polyline points="409.3,291.9 396.9,294.1" fill="none" stroke="#E8191C" stroke-width="1.3" stroke-linejoin="miter"/><polyline points="412.1,302 403.7,309.4" fill="none" stroke="#E8191C" stroke-width="1.3" stroke-linejoin="miter"/><polyline points="428.6,303.7 421.2,317.3 405.4,316.7" fill="none" stroke="#E8191C" stroke-width="1.3" stroke-linejoin="miter"/><polyline points="434.8,302 441.6,314.5 432.5,326.9" fill="none" stroke="#E8191C" stroke-width="1.3" stroke-linejoin="miter"/><polyline points="441.6,297.5 456.8,301.5 466.4,288.5" fill="none" stroke="#E8191C" stroke-width="1.3" stroke-linejoin="miter"/><ellipse cx="795.5" cy="351" rx="18.5" ry="14.2" transform="rotate(22 795.5 351)" fill="#E8191C"/><polyline points="794.1,337.2 786.2,321.4 770.4,323.1" fill="none" stroke="#E8191C" stroke-width="1.3" stroke-linejoin="miter"/><polyline points="801.5,338.4 808.3,327.6 798.6,315.2" fill="none" stroke="#E8191C" stroke-width="1.3" stroke-linejoin="miter"/><polyline points="780.5,337.8 772.6,331.6" fill="none" stroke="#E8191C" stroke-width="1.3" stroke-linejoin="miter"/><polyline points="777.1,348 766.4,346.9" fill="none" stroke="#E8191C" stroke-width="1.3" stroke-linejoin="miter"/><polyline points="785.1,361.6 771.5,365 761.3,352.5" fill="none" stroke="#E8191C" stroke-width="1.3" stroke-linejoin="miter"/><polyline points="792.4,364.4 787.9,378.5 771.5,379.7" fill="none" stroke="#E8191C" stroke-width="1.3" stroke-linejoin="miter"/><polyline points="799.8,365.5 807.1,380.2 823.5,379.1" fill="none" stroke="#E8191C" stroke-width="1.3" stroke-linejoin="miter"/><polyline points="808.8,342.3 824.1,337.8 834.3,351.4" fill="none" stroke="#E8191C" stroke-width="1.3" stroke-linejoin="miter"/><ellipse cx="329.3" cy="487.2" rx="9.5" ry="13.4" transform="rotate(0 329.3 487.2)" fill="#E8191C"/><polyline points="324.7,476 321.7,467.8" fill="none" stroke="#E8191C" stroke-width="1.3" stroke-linejoin="miter"/><polyline points="332.6,475 333.1,466.8" fill="none" stroke="#E8191C" stroke-width="1.3" stroke-linejoin="miter"/><polyline points="320.2,484.7 312.3,477.7 316.3,467.3" fill="none" stroke="#E8191C" stroke-width="1.3" stroke-linejoin="miter"/><polyline points="337.6,479.7 343.5,471.3 337.6,462.4" fill="none" stroke="#E8191C" stroke-width="1.3" stroke-linejoin="miter"/><polyline points="320.2,489.6 310.3,492.1 303.9,482.7" fill="none" stroke="#E8191C" stroke-width="1.3" stroke-linejoin="miter"/><polyline points="338.6,486.6 348,486.1 351.9,476.2" fill="none" stroke="#E8191C" stroke-width="1.3" stroke-linejoin="miter"/><polyline points="321.7,495.5 315.3,504.5 322.7,513.4" fill="none" stroke="#E8191C" stroke-width="1.3" stroke-linejoin="miter"/><polyline points="337.6,492.6 347,500 342.5,509.4" fill="none" stroke="#E8191C" stroke-width="1.3" stroke-linejoin="miter"/>
<g transform="translate(325.8,532.5) rotate(7.6)">
<text x="-0.5" y="0" font-family="Liberation Sans" font-weight="bold" font-size="34" fill="#E8191C" textLength="389.5" lengthAdjust="spacingAndGlyphs">A Presentation Template</text>
</g>
<rect x="1108" y="318" width="125" height="8" rx="4" fill="#595959"/>
</g>
</g>
</svg>

<svg class="a" style="left:0;top:683px" width="1259" height="25" viewBox="0 683 1259 25">
<rect x="0" y="685" width="1259" height="1" fill="#CACACA"/>
<rect x="0" y="686" width="1259" height="22" fill="#F1F1F1"/>
<rect x="895" y="686" width="38" height="21" fill="#C6C6C6"/>
<g font-family="Liberation Sans" font-size="12" fill="#444">
<text x="9" y="699.5" textLength="63" lengthAdjust="spacingAndGlyphs">Slide 1 of 26</text>
<text x="122" y="699.5" textLength="116" lengthAdjust="spacingAndGlyphs">English (United States)</text>
<text x="755" y="699.5" textLength="29" lengthAdjust="spacingAndGlyphs">Notes</text>
<text x="822" y="699.5" textLength="54" lengthAdjust="spacingAndGlyphs">Comments</text>
<text x="1189" y="699.5" textLength="24" lengthAdjust="spacingAndGlyphs">70 %</text>
</g>
<g fill="none" stroke="#666" stroke-width="1">
<path d="M91.5,689.5 h5.5 l0.5,0.5 l0.5,-0.5 h5.5 v2.5 M91.5,689.5 v10.5 h5.5 l0.5,0.5 l0.5,-0.5 h5.5 v-3 M97.5,690 v10"/>
<path d="M99.5,698 l6,-6" stroke-width="2.2"/>
<path d="M739,694.5 h11 M739,697.5 h11 M739,700.5 h11 M742,692 l2.5,-2.5 l2.5,2.5"/>
<rect x="907.5" y="689.5" width="13" height="12"/>
<rect x="910.5" y="691.5" width="8" height="5"/>
<path d="M910.5,699 h8"/>
<rect x="945.5" y="689.5" width="5" height="5"/><rect x="953.5" y="689.5" width="5" height="5"/>
<rect x="945.5" y="697.5" width="5" height="5"/><rect x="953.5" y="697.5" width="5" height="5"/>
<path d="M983.5,690.5 h5 l1.5,1 l1.5,-1 h5 v11 h-5 l-1.5,1 l-1.5,-1 h-5z M990,691.5 v10 M985,693 h3 M985,695 h3 M985,697 h3 M992,693 h3 M992,695 h3 M992,697 h3"/>
<path d="M1021,690.5 h13 M1022.5,690.5 v6 h10 v-6 M1027.5,696.5 v5 M1024.5,702 h6"/>
<rect x="1227.5" y="690.5" width="13" height="13"/>
<path d="M1234,692 v3 M1234,699 v3 M1229,697 h3 M1236,697 h3"/>
</g>
<path d="M1233,693 l1,-1 l1,1 M1233,701 l1,1 l1,-1" stroke="#666" fill="none" stroke-width="0.8"/>
<path d="M806,690 h12 v8 h-6 l-3,3 v-3 h-3z" fill="#666"/>
<rect x="1062" y="695.5" width="100" height="1" fill="#A8A8A8"/>
<rect x="1112" y="692" width="1" height="7" fill="#A8A8A8"/>
<rect x="1095" y="690" width="4" height="12" fill="#555"/>
<rect x="1052" y="695" width="6" height="2" fill="#555"/>
<path d="M1166,696 h8 M1170,692 v8" stroke="#555" stroke-width="2"/>
</svg>

<div class="a" style="left:0;top:0;width:1px;height:708px;background:#B7472A"></div>
<div class="a" style="left:1258px;top:0;width:1px;height:708px;background:#B7472A"></div>
<div class="a" style="left:0;top:707px;width:1259px;height:1px;background:#B7472A"></div>
</body></html>
